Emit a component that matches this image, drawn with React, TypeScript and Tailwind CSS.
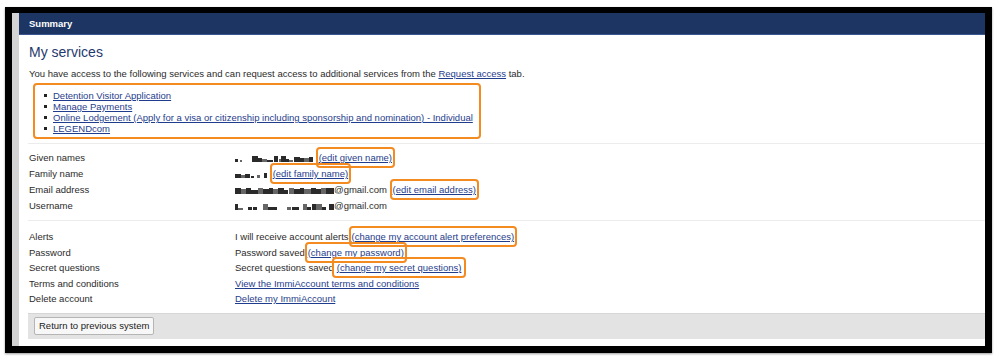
import React from 'react'

const font = { fontFamily: '"Liberation Sans", Arial, Helvetica, sans-serif' }

// mosaic blocks standing in for the pixelated personal data
type Seg = [number, number, number] // width, height, gap after

const givenBlocks: Seg[] = [[3, 3, 2], [2, 2, 10], [6, 6, 0], [4, 4, 0], [5, 3, 0], [6, 2, 1], [4, 6, 1], [2, 3, 0], [5, 6, 0], [3, 3, 0], [4, 2, 1], [6, 5, 0], [4, 4, 0], [5, 4, 0], [4, 5, 0]]
const familyBlocks: Seg[] = [[6, 4, 0], [4, 3, 0], [5, 4, 1], [3, 2, 3], [3, 3, 4], [3, 5, 0]]
const emailBlocks: Seg[] = [[6, 6, 0], [5, 5, 0], [5, 6, 0], [7, 4, 0], [5, 6, 0], [6, 5, 0], [4, 6, 0], [5, 5, 0], [6, 6, 0], [4, 4, 1], [5, 6, 0], [6, 5, 0], [4, 6, 0], [7, 5, 0], [5, 6, 0], [5, 5, 0], [5, 6, 0], [8, 6, 0]]
const userBlocks: Seg[] = [[3, 6, 0], [5, 2, 5], [4, 3, 1], [4, 3, 6], [5, 6, 0], [5, 3, 0], [4, 3, 10], [4, 3, 1], [4, 3, 0], [3, 3, 4], [4, 6, 0], [4, 3, 1], [4, 6, 0], [6, 6, 0], [4, 3, 3], [5, 6, 0]]

function Redacted({ segs }: { segs: Seg[] }) {
  return (
    <span className="inline-flex items-end h-[8px] align-[-1px]">
      {segs.map(([w, h, g], i) => (
        <span
          key={i}
          className={i % 3 === 1 ? 'bg-[#666]' : 'bg-[#2a2a2a]'}
          style={{ width: w, height: h, marginRight: g }}
        />
      ))}
    </span>
  )
}

function Hl({ children, wide }: { children: React.ReactNode; wide?: boolean }) {
  return (
    <span className={wide ? 'border-2 border-[#f38b21] rounded-[4px] px-[3px] py-[3px]' : 'border-2 border-[#f38b21] rounded-[4px] px-[1px] py-[3px]'}>
      {children}
    </span>
  )
}

function A({ children }: { children: React.ReactNode }) {
  return <a href="#" className="text-[#1f3d8c] underline">{children}</a>
}

function Row({ label, children, tight }: { label: string; children: React.ReactNode; tight?: boolean }) {
  return (
    <div className={tight ? 'leading-[15.5px] whitespace-nowrap' : 'leading-[16px] whitespace-nowrap'}>
      <span className="inline-block w-[206px]">{label}</span>
      {children}
    </div>
  )
}

export default function App() {
  return (
    <div className="bg-white w-[1000px] h-[361px] pl-[5px] pt-[7px]" style={font}>
      <div className="w-[987px] h-[346px] border-black border-l-[7px] border-r-[7px] border-t-[6px] border-b-[7px] bg-[#d3d3d3] pl-[7px] flex shadow-[0_1px_2px_rgba(0,0,0,0.4)]">
        <div className="bg-white flex-1 flex flex-col">
          <div className="h-[22px] bg-[#1c3563] border-b border-[#3a5590] text-white font-bold text-[9.5px] leading-[21px] pl-[10px]">
            Summary
          </div>

          <div className="flex-1 flex flex-col text-[9.5px] text-[#2b2b2b]">
            <div className="pl-[10px]">
              <h1 className="text-[#1f3a6e] text-[14px] leading-[18px] mt-[8px]">My services</h1>
              <p className="leading-[12px] mt-[7px]">
                You have access to the following services and can request access to additional services from the{' '}
                <A>Request access</A> tab.
              </p>
              <div className="ml-[4px] mt-[3px] w-[448px] border-2 border-[#f38b21] rounded-[4px] pt-[5px] pb-[3px] pl-[9px]">
                {[
                  'Detention Visitor Application',
                  'Manage Payments',
                  'Online Lodgement (Apply for a visa or citizenship including sponsorship and nomination) - Individual',
                  'LEGENDcom',
                ].map((t) => (
                  <div key={t} className="flex items-center leading-[11px]">
                    <span className="w-[3px] h-[3px] bg-[#222] mr-[6px]" />
                    <A>{t}</A>
                  </div>
                ))}
              </div>
            </div>

            <div className="ml-[9px] mt-[4px] border-t border-[#ececec] pt-[6px] pl-[1px]">
              <Row label="Given names">
                <Redacted segs={givenBlocks} /> <Hl><A>(edit given name)</A></Hl>
              </Row>
              <Row label="Family name">
                <Redacted segs={familyBlocks} /> <Hl><A>(edit family name)</A></Hl>
              </Row>
              <Row label="Email address">
                <Redacted segs={emailBlocks} />@gmail.com <Hl><A>(edit email address)</A></Hl>
              </Row>
              <Row label="Username">
                <Redacted segs={userBlocks} />@gmail.com
              </Row>
            </div>

            <div className="ml-[9px] mt-[6px] border-t border-[#ececec] pt-[8px] pl-[1px]">
              <Row tight label="Alerts">
                I will receive account alerts<Hl><A>(change my account alert preferences)</A></Hl>
              </Row>
              <Row tight label="Password">
                Password saved<Hl><A>(change my password)</A></Hl>
              </Row>
              <Row tight label="Secret questions">
                Secret questions saved<span className="ml-[-2px]"><Hl wide><A>(change my secret questions)</A></Hl></span>
              </Row>
              <Row tight label="Terms and conditions">
                <A>View the ImmiAccount terms and conditions</A>
              </Row>
              <Row tight label="Delete account">
                <A>Delete my ImmiAccount</A>
              </Row>
            </div>

            <div className="ml-[9px] mt-[6px] h-[26px] bg-[#e3e3e3] border-t border-[#d6d6d6] flex items-center pl-[6px]">
              <button className="h-[18px] px-[4px] bg-[#f7f7f7] border border-[#b5b5b5] rounded-[2px] text-[9.5px] text-[#222] leading-none">
                Return to previous system
              </button>
            </div>
          </div>
        </div>
      </div>
    </div>
  )
}
